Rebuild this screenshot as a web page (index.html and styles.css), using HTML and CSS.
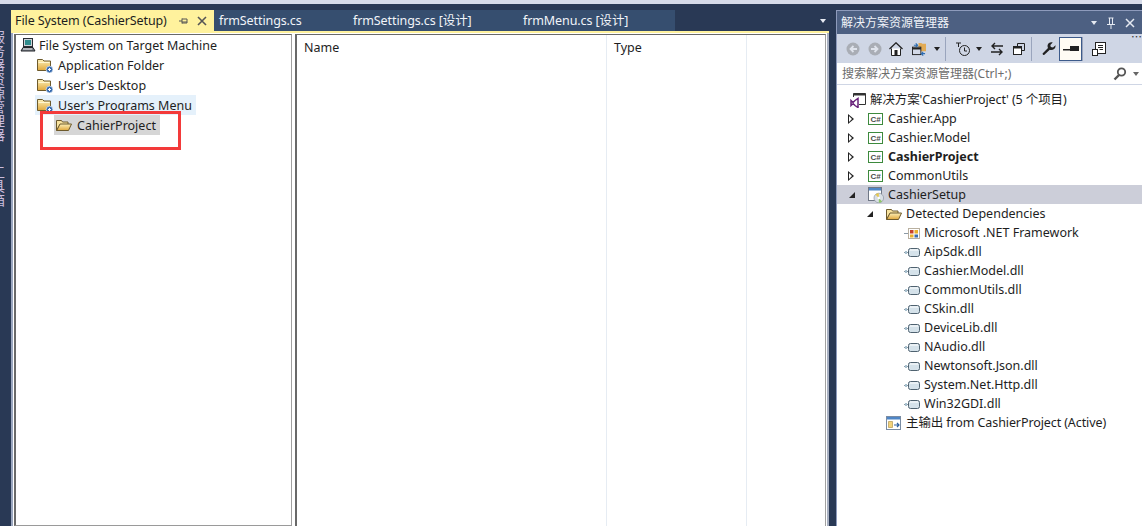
FILE: index.html
```html
<!DOCTYPE html>
<html lang="zh-CN">
<head>
  <meta charset="UTF-8" />
  <meta name="viewport" content="width=device-width, initial-scale=1" />
  <title>File System (CashierSetup)</title>
  <link rel="stylesheet" href="styles.css">
</head>
<body>
  <svg class="defs" width="0" height="0">
    <defs>
      <linearGradient id="fold" x1="0" y1="0" x2="0" y2="1">
        <stop offset="0" stop-color="#fdf0b8" />
        <stop offset="1" stop-color="#e0a83c" />
      </linearGradient>
      <symbol id="i-computer" viewBox="0 0 16 16">
        <rect x="3.5" y="1.5" width="9" height="8" fill="#cfd3d8" stroke="#2a2e34" />
        <rect x="5" y="3" width="6" height="5" fill="#2f8c8c" />
        <path d="M3 10.5h10l2 3.5H1z" fill="#7d828a" stroke="#22252a" />
        <path d="M3 12h9" stroke="#e6e8ea" />
      </symbol>
      <symbol id="i-folder" viewBox="0 0 16 16">
        <path d="M.5 2.5h5l1.500 1.500h6.500v9.500H.5z" fill="url(#fold)" stroke="#6d5a2c" />
        <path d="M1.500 5.500h11" stroke="#fff6cf" />
        <circle cx="12.500" cy="12.500" r="3.400" fill="#3a6db0" stroke="#fff" stroke-width=".6" />
        <path d="M11 12.500h3M12.500 11v3" stroke="#fff" />
      </symbol>
      <symbol id="i-open" viewBox="0 0 16 16">
        <path d="M.5 3.500h5l1 1.500h5.500v2.500H4L.5 13.500z" fill="#f9e4a0" stroke="#6d5a2c" />
        <path d="M.7 13.500l3.300-6.500h11.500l-3 6.500z" fill="url(#fold)" stroke="#6d5a2c" />
      </symbol>
      <symbol id="i-cs" viewBox="0 0 16 16">
        <rect x=".5" y="2.500" width="14" height="11" fill="#fff" stroke="#3d8a3d" />
        <text x="7.500" y="11" font-size="8" font-weight="700" text-anchor="middle" fill="#4a4a4a" font-family="Liberation Sans, sans-serif">C#</text>
      </symbol>
      <symbol id="i-sln" viewBox="0 0 16 16">
        <path d="M3.500 5V1.500h12v11H9" fill="none" stroke="#333" />
        <path d="M3.500 1.500h12v2h-12z" fill="#333" />
        <path d="M1 8.500l2 2 2-2 3-2v9l-3-2-2-2-2 2v-5z" fill="none" stroke="#68217a" stroke-width="1.500" />
      </symbol>
      <symbol id="i-setup" viewBox="0 0 16 16">
        <rect x=".5" y=".5" width="13" height="13" fill="#fff" stroke="#6f7785" />
        <rect x="1" y="1" width="12" height="2.500" fill="#4f86c6" />
        <circle cx="10.800" cy="11" r="4.800" fill="#d9dfe6" stroke="#8d95a0" stroke-width=".7" />
        <path d="M10.800 11L7.400 7.600a4.800 4.800 0 0 1 3.400-1.400z" fill="#e4c84f" />
        <path d="M10.800 11l3.400 3.400a4.800 4.800 0 0 1-3.400 1.400z" fill="#8fc46b" />
        <circle cx="10.800" cy="11" r="1.200" fill="#fff" />
      </symbol>
      <symbol id="i-dll" viewBox="0 0 16 16">
        <path d="M0 8.500h4" stroke="#8c9aa6" />
        <rect x="1" y="7" width="2" height="3" fill="#a9c1cf" />
        <rect x="4.500" y="4.500" width="11" height="8" rx="2" fill="#d5e2ea" stroke="#4f6270" />
        <path d="M6 6h8" stroke="#fff" />
      </symbol>
      <symbol id="i-net" viewBox="0 0 16 16">
        <path d="M0 8.500h4" stroke="#8c9aa6" />
        <rect x="4.500" y="3.500" width="11" height="10" fill="#fff" stroke="#b9b0a0" />
        <rect x="6" y="5" width="3.500" height="3.500" fill="#c8402a" />
        <rect x="10.500" y="5" width="3.500" height="3.500" fill="#e9b02c" />
        <rect x="6" y="9.500" width="3.500" height="3" fill="#e9b02c" />
        <rect x="10.500" y="9.500" width="3.500" height="3" fill="#3a6db0" />
      </symbol>
      <symbol id="i-output" viewBox="0 0 16 16">
        <rect x=".5" y="1.500" width="14" height="13" fill="#fff" stroke="#7a8ca3" />
        <rect x="1" y="2" width="13" height="2.500" fill="#4f86c6" />
        <path d="M2.500 6.500h4v6h-4z" fill="#f2d27a" stroke="#a98a3c" stroke-width=".6" />
        <path d="M8 10h5M11 8l2 2-2 2" fill="none" stroke="#2d5f9e" stroke-width="1.200" />
      </symbol>
      <symbol id="t-back" viewBox="0 0 14 14">
        <circle cx="7" cy="7" r="6.500" fill="#a9adb5" />
        <path d="M11 7H4.500M7.500 4L4.500 7l3 3" fill="none" stroke="#dfe3ec" stroke-width="1.800" />
      </symbol>
      <symbol id="t-forward" viewBox="0 0 14 14">
        <circle cx="7" cy="7" r="6.500" fill="#a9adb5" />
        <path d="M3 7h6.500M6.500 4l3 3-3 3" fill="none" stroke="#dfe3ec" stroke-width="1.800" />
      </symbol>
      <symbol id="t-home" viewBox="0 0 14 14">
        <path d="M.5 7L7 .8 13.500 7" fill="none" stroke="#222" stroke-width="1.300" />
        <path d="M2.500 6.500v7h9v-7" fill="#fff" stroke="#222" />
        <rect x="5.500" y="8" width="3" height="5.500" fill="#222" />
      </symbol>
      <symbol id="t-sync" viewBox="0 0 15 15">
        <path d="M7 1h3l1 1h4v8H7z" fill="#e2ab55" />
        <rect x=".5" y="5.500" width="9" height="8" fill="#d3d9e7" stroke="#222" />
        <path d="M.5 6h9v2h-9z" fill="#222" />
        <path d="M2 3.500h3.500M4 1.500l2 2-2 2" fill="none" stroke="#2d6cb0" stroke-width="1.200" />
        <path d="M14 12.500h-3.500M12 10.500l-2 2 2 2" fill="none" stroke="#2d6cb0" stroke-width="1.200" />
      </symbol>
      <symbol id="t-clock" viewBox="0 0 14 14">
        <path d="M0 1h5M2.500 1v4" stroke="#222" />
        <circle cx="8.500" cy="8.500" r="5" fill="none" stroke="#222" />
        <path d="M8.500 5.500v3.500H11" fill="none" stroke="#222" />
      </symbol>
      <symbol id="t-swap" viewBox="0 0 14 14">
        <path d="M13 4H2M5 1L2 4l3 3" fill="none" stroke="#222" stroke-width="1.400" />
        <path d="M1 10h11M9 7l3 3-3 3" fill="none" stroke="#222" stroke-width="1.400" />
      </symbol>
      <symbol id="t-copy" viewBox="0 0 14 14">
        <path d="M5.500 4V1.500h7v7H10" fill="none" stroke="#222" />
        <rect x="1.500" y="4.500" width="8" height="8" fill="#fff" stroke="#222" />
        <path d="M1.500 5.500h8" stroke="#222" stroke-width="2" />
      </symbol>
      <symbol id="t-wrench" viewBox="0 0 14 14">
        <path d="M13.500 3.200L11 5.500 8.800 5 8.300 3 10.700.5C8.500-.2 6 1 5.600 3.300 5.400 4.300 5.600 5.200 6 6L.8 11.200c-.8.800.7 2.400 1.600 1.600L7.800 7.800c2.700 1 6.300-1.200 5.700-4.600z" fill="#222" />
      </symbol>
      <symbol id="t-collapse" viewBox="0 0 16 6">
        <rect x="0" y="3" width="16" height="1.500" fill="#222" />
        <rect x="7" y="0" width="9" height="5" fill="#222" />
      </symbol>
      <symbol id="t-props" viewBox="0 0 14 14">
        <rect x="3.500" y=".5" width="10" height="11" fill="#fff" stroke="#222" />
        <rect x=".5" y="7.500" width="5" height="6" fill="#fff" stroke="#222" />
        <path d="M6 3.500h5M6 5.500h5M7.500 7.500h3.500" stroke="#222" />
      </symbol>
      <symbol id="t-search" viewBox="0 0 14 14">
        <circle cx="8.500" cy="5" r="3.700" fill="none" stroke="#555" stroke-width="1.800" />
        <path d="M6 8L1.500 12.500" stroke="#555" stroke-width="2.400" />
      </symbol>
    </defs>
  </svg>

  <div class="topline"></div>

  <div class="workspace">
    <div class="rail">
      <span class="rail-text">服务器资源管理器</span>
      <span class="rail-text">工具箱</span>
    </div>

    <main class="doc">
      <div class="tabs">
        <div class="tab active">
          <span class="tab-title">File System (CashierSetup)</span>
          <svg class="tab-pin" width="10" height="10" viewBox="0 0 10 10"><path d="M0 5h3M3 2.500v5M3 3h5v4H3M3 6h5" fill="none" stroke="#555" /></svg>
          <svg class="tab-close" width="10" height="10" viewBox="0 0 10 10"><path d="M1 1l8 8M9 1L1 9" stroke="#555" stroke-width="1.600" /></svg>
        </div>
        <div class="tab t-one">frmSettings.cs</div>
        <div class="tab t-two">frmSettings.cs [设计]</div>
        <div class="tab t-three">frmMenu.cs [设计]</div>
        <div class="tab-fill"><span class="down-arrow light"></span></div>
      </div>
      <div class="tab-line"></div>

      <div class="doc-body">
        <section class="tree-pane">
          <div class="tree-row root"><svg class="ico"><use href="#i-computer" /></svg>File System on Target Machine</div>
          <div class="tree-row child"><svg class="ico"><use href="#i-folder" /></svg>Application Folder</div>
          <div class="tree-row child"><svg class="ico"><use href="#i-folder" /></svg>User's Desktop</div>
          <div class="tree-row child"><span class="row-label hover"><svg class="ico"><use href="#i-folder" /></svg>User's Programs Menu</span></div>
          <div class="tree-row grandchild"><span class="row-label selected"><svg class="ico"><use href="#i-open" /></svg>CahierProject</span></div>
          <div class="red-box"></div>
        </section>

        <section class="list-pane">
          <div class="col col-name">Name</div>
          <div class="col col-type">Type</div>
          <div class="col col-rest"></div>
        </section>
      </div>
    </main>

    <aside class="explorer">
      <header class="ex-title">
        <span class="ex-title-text">解决方案资源管理器</span>
        <span class="down-arrow light"></span>
        <svg width="10" height="12" viewBox="0 0 10 12"><path d="M2.500 1h5M3.500 1v6M6.500 1v6M1 7.500h8M5 8v4" fill="none" stroke="#e6eaf2" /></svg>
        <svg width="10" height="10" viewBox="0 0 10 10"><path d="M1 1l8 8M9 1L1 9" stroke="#e6eaf2" stroke-width="1.500" /></svg>
      </header>

      <div class="ex-toolbar">
        <svg class="tb"><use href="#t-back" /></svg>
        <svg class="tb"><use href="#t-forward" /></svg>
        <svg class="tb home"><use href="#t-home" /></svg>
        <svg class="tb"><use href="#t-sync" /></svg>
        <span class="down-arrow dark"></span>
        <span class="tb-sep"></span>
        <svg class="tb"><use href="#t-clock" /></svg>
        <span class="down-arrow dark close"></span>
        <svg class="tb"><use href="#t-swap" /></svg>
        <svg class="tb"><use href="#t-copy" /></svg>
        <span class="tb-sep"></span>
        <svg class="tb"><use href="#t-wrench" /></svg>
        <span class="tb-active"><svg width="16" height="6"><use href="#t-collapse" /></svg></span>
        <span class="tb-sep"></span>
        <svg class="tb"><use href="#t-props" /></svg>
        <span class="tb-more">&#8943;</span>
      </div>

      <div class="ex-search">
        <span class="ex-search-text">搜索解决方案资源管理器(Ctrl+;)</span>
        <svg class="tb"><use href="#t-search" /></svg>
        <span class="down-arrow grey"></span>
      </div>

      <div class="ex-tree">
        <div class="se-row lvl0 mixed"><svg class="ico"><use href="#i-sln" /></svg><span>解决方案'CashierProject' (5 个项目)</span></div>
        <div class="se-row lvl1"><span class="arrow closed"></span><svg class="ico"><use href="#i-cs" /></svg><span>Cashier.App</span></div>
        <div class="se-row lvl1"><span class="arrow closed"></span><svg class="ico"><use href="#i-cs" /></svg><span>Cashier.Model</span></div>
        <div class="se-row lvl1 bold"><span class="arrow closed"></span><svg class="ico"><use href="#i-cs" /></svg><span>CashierProject</span></div>
        <div class="se-row lvl1"><span class="arrow closed"></span><svg class="ico"><use href="#i-cs" /></svg><span>CommonUtils</span></div>
        <div class="se-row lvl1 current"><span class="arrow opened"></span><svg class="ico"><use href="#i-setup" /></svg><span>CashierSetup</span></div>
        <div class="se-row lvl2"><span class="arrow opened"></span><svg class="ico"><use href="#i-open" /></svg><span>Detected Dependencies</span></div>
        <div class="se-row lvl3"><span class="arrow"></span><svg class="ico"><use href="#i-net" /></svg><span>Microsoft .NET Framework</span></div>
        <div class="se-row lvl3"><span class="arrow"></span><svg class="ico"><use href="#i-dll" /></svg><span>AipSdk.dll</span></div>
        <div class="se-row lvl3"><span class="arrow"></span><svg class="ico"><use href="#i-dll" /></svg><span>Cashier.Model.dll</span></div>
        <div class="se-row lvl3"><span class="arrow"></span><svg class="ico"><use href="#i-dll" /></svg><span>CommonUtils.dll</span></div>
        <div class="se-row lvl3"><span class="arrow"></span><svg class="ico"><use href="#i-dll" /></svg><span>CSkin.dll</span></div>
        <div class="se-row lvl3"><span class="arrow"></span><svg class="ico"><use href="#i-dll" /></svg><span>DeviceLib.dll</span></div>
        <div class="se-row lvl3"><span class="arrow"></span><svg class="ico"><use href="#i-dll" /></svg><span>NAudio.dll</span></div>
        <div class="se-row lvl3"><span class="arrow"></span><svg class="ico"><use href="#i-dll" /></svg><span>Newtonsoft.Json.dll</span></div>
        <div class="se-row lvl3"><span class="arrow"></span><svg class="ico"><use href="#i-dll" /></svg><span>System.Net.Http.dll</span></div>
        <div class="se-row lvl3"><span class="arrow"></span><svg class="ico"><use href="#i-dll" /></svg><span>Win32GDI.dll</span></div>
        <div class="se-row lvl2 mixed"><span class="arrow"></span><svg class="ico"><use href="#i-output" /></svg><span>主输出 from CashierProject (Active)</span></div>
      </div>
    </aside>
  </div>
</body>
</html>
```

FILE: styles.css
```css
* {
  box-sizing: border-box;
}

html,
body {
  height: 100%;
}

body {
  margin: 0;
  background: #293955;
  font-family: "Noto Sans", "Noto Sans CJK SC", sans-serif;
  font-size: 12.5px;
  color: #1e1e1e;
  display: flex;
  flex-direction: column;
  overflow: hidden;
}

.defs {
  display: block;
  height: 0;
}

.topline {
  height: 4px;
  background: #d6dbe9;
  flex: none;
}

.workspace {
  flex: 1;
  min-height: 0;
  display: flex;
  padding-top: 6px;
}

/* left rail, text is cut off by the edge of the shot */
.rail {
  width: 11px;
  flex: none;
  overflow: hidden;
  display: flex;
  flex-direction: column;
  align-items: flex-start;
  gap: 23px;
  padding-top: 20px;
}

.rail-text {
  writing-mode: vertical-rl;
  font-size: 14px;
  line-height: 14px;
  color: #c9bcdc;
  margin-left: -10px;
}

.doc {
  width: 818px;
  flex: none;
  display: flex;
  flex-direction: column;
}

.tabs {
  height: 21px;
  flex: none;
  display: flex;
  color: #f1f4f9;
  letter-spacing: -0.1px;
}

.tab {
  background: #364e6f;
  padding: 0 5px;
  line-height: 22px;
  white-space: nowrap;
}

.tab.active {
  width: 203px;
  padding: 0 7px 0 4px;
  background: #fff29d;
  color: #1e1e1e;
  display: flex;
  align-items: center;
}

.tab-title {
  flex: 1;
}

.tab-close {
  margin-left: 8px;
}

.t-one {
  width: 134px;
}

.t-two {
  width: 170px;
}

.t-three {
  width: 157px;
}

.tab-fill {
  flex: 1;
  display: flex;
  justify-content: flex-end;
  align-items: center;
  padding-right: 3px;
}

.tab-line {
  height: 2px;
  flex: none;
  background: #fff29d;
}

.doc-body {
  flex: 1;
  min-height: 0;
  display: flex;
  gap: 3px;
  background: #fff;
  border-left: 2px solid #9aa6bf;
  border-right: 2px solid #a9b1c2;
  padding: 1px 1px 0 1px;
}

.tree-pane {
  width: 278px;
  flex: none;
  border: 1px solid #9a9a9a;
  border-top-color: #696969;
  border-left: 2px solid #696969;
  border-right-color: #a0a0a0;
  position: relative;
}

.tree-row {
  height: 20px;
  display: flex;
  align-items: center;
  white-space: nowrap;
}

.root {
  padding-left: 4px;
}

.child {
  padding-left: 21px;
}

.grandchild {
  padding-left: 40px;
}

.row-label {
  display: flex;
  align-items: center;
  height: 20px;
  margin-left: -2px;
  padding: 0 4px 0 2px;
}

.hover {
  background: #e5f1fb;
}

.selected {
  background: #d6d6d6;
}

.ico {
  width: 16px;
  height: 16px;
  flex: none;
  margin-right: 4px;
}

.child .ico,
.grandchild .ico {
  margin-right: 5px;
}

.root .ico {
  margin-right: 3px;
}

.red-box {
  position: absolute;
  left: 24px;
  top: 76px;
  width: 141px;
  height: 39px;
  border: 3px solid #f33a3a;
}

.list-pane {
  flex: 1;
  display: flex;
  border-top: 1px solid #696969;
  border-left: 2px solid #696969;
  border-right: 1px solid #a0a0a0;
}

.col {
  padding: 4px 6px 4px 7px;
  border-right: 1px solid #e6ecf3;
}

.col-name {
  width: 310px;
}

.col-type {
  width: 140px;
}

.col-rest {
  flex: 1;
  border-right: 0;
}

.explorer {
  width: 306px;
  flex: none;
  margin-left: 7px;
  display: flex;
  flex-direction: column;
  background: #fff;
  border-left: 1px solid #8e9bbc;
  border-top: 1px solid #8e9bbc;
}

.ex-title {
  height: 23px;
  flex: none;
  background: #4d6082;
  color: #f1f4f9;
  display: flex;
  align-items: center;
  gap: 9px;
  padding: 0 7px 0 4px;
  font-size: 12px;
}

.ex-title-text {
  flex: 1;
  margin-top: -2px;
}

.ex-toolbar {
  height: 29px;
  flex: none;
  background: #cfd6e5;
  display: flex;
  align-items: center;
  gap: 8px;
  padding-left: 9px;
  position: relative;
}

.tb {
  width: 14px;
  height: 14px;
  flex: none;
}

.tb.home {
  margin-left: -1px;
  margin-right: 1px;
}

.tb-sep {
  width: 1px;
  height: 24px;
  background: #9aa5bd;
  margin: 0 2px 0 -3px;
}

.tb-active {
  width: 23px;
  height: 24px;
  margin-left: -5px;
  background: #fffcf4;
  border: 1px solid #3c5a8a;
  display: flex;
  align-items: center;
  justify-content: center;
}

.tb-active + .tb-sep {
  margin: 0 1px 0 -8px;
}

.tb-more {
  position: absolute;
  right: 0;
  top: -6px;
  font-size: 11px;
  color: #333;
}

.ex-search {
  height: 22px;
  flex: none;
  display: flex;
  align-items: center;
  gap: 6px;
  padding: 0 3px 0 5px;
  background: #fff;
  border-bottom: 1px solid #cfd6e5;
  color: #6d6d6d;
}

.ex-search-text {
  flex: 1;
  font-size: 12px;
  margin-top: -2px;
}

.ex-tree {
  flex: 1;
  padding-top: 5px;
  white-space: nowrap;
}

.se-row {
  height: 19px;
  display: flex;
  align-items: center;
}

/* the CJK fallback pushes these rows a pixel down */
.mixed span:last-child {
  margin-top: -2px;
  letter-spacing: -0.1px;
}

.lvl0 {
  padding-left: 13px;
}

.lvl1 {
  padding-left: 11px;
}

.lvl2 {
  padding-left: 29px;
}

.lvl3 {
  padding-left: 47px;
}

.bold {
  font-weight: 700;
}

.current {
  background: #ccced9;
}

.arrow {
  width: 20px;
  height: 10px;
  flex: none;
  position: relative;
}

.arrow.closed::before {
  content: "";
  display: block;
  width: 0;
  height: 0;
  border-left: 6px solid #222;
  border-top: 5px solid transparent;
  border-bottom: 5px solid transparent;
}

.arrow.closed::after {
  content: "";
  position: absolute;
  left: 1px;
  top: 2px;
  width: 0;
  height: 0;
  border-left: 3.5px solid #fff;
  border-top: 3px solid transparent;
  border-bottom: 3px solid transparent;
}

.arrow.opened::before {
  content: "";
  display: block;
  width: 0;
  height: 0;
  margin: 2px 0 0 1px;
  border-right: 6px solid #222;
  border-top: 6px solid transparent;
}

.down-arrow {
  width: 0;
  height: 0;
  flex: none;
  border-left: 3.5px solid transparent;
  border-right: 3.5px solid transparent;
  border-top: 4px solid #222;
}

.down-arrow.light {
  border-top-color: #e6eaf2;
}

.down-arrow.grey {
  border-top-color: #666;
}

.down-arrow.close {
  margin-left: -2px;
}
```
